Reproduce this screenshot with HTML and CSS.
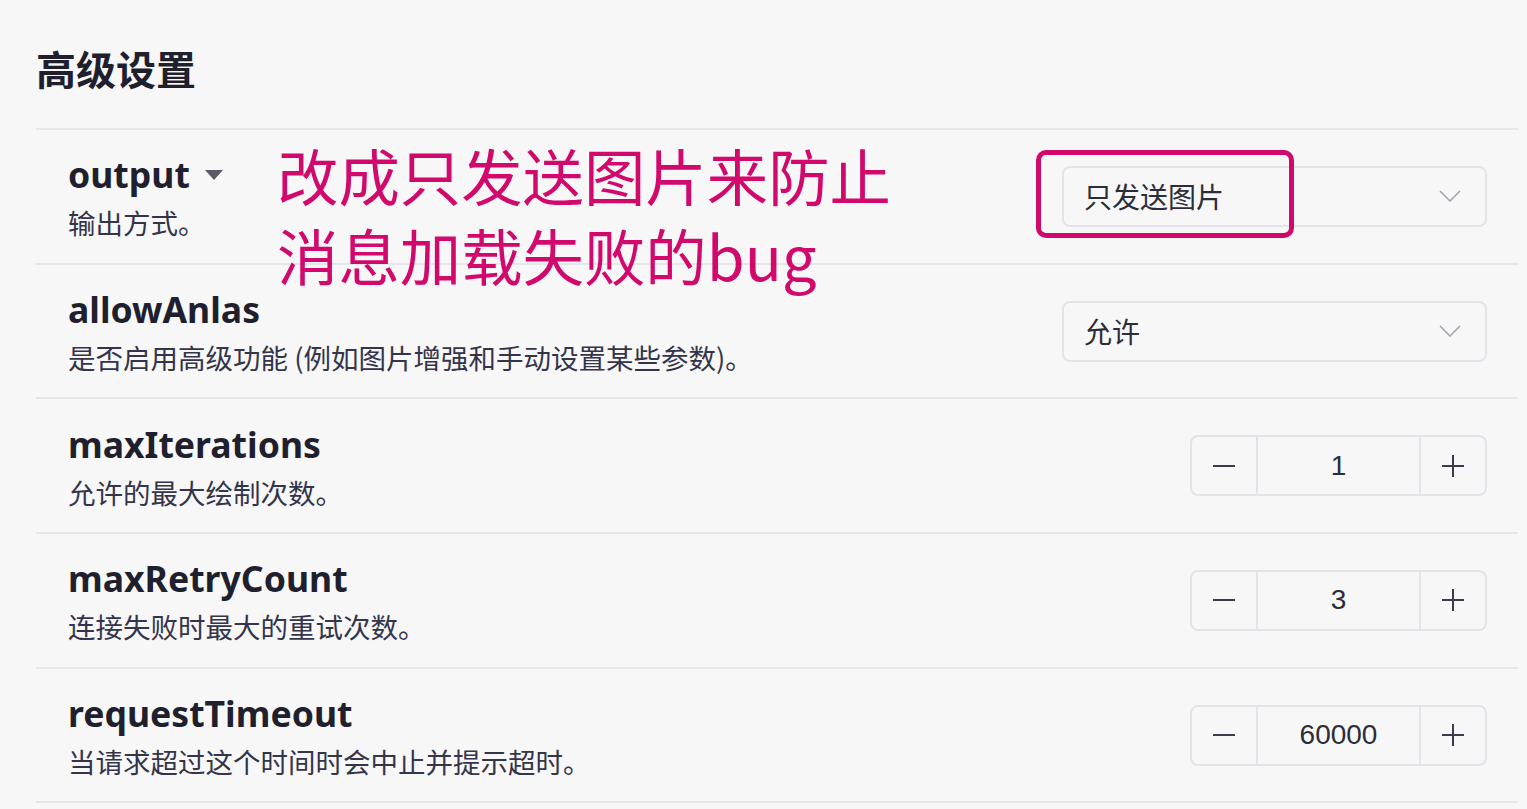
FILE: index.html
```html
<!DOCTYPE html>
<html lang="zh-CN">
<head>
<meta charset="utf-8">
<title>高级设置</title>
<link rel="stylesheet" href="styles.css">
</head>
<body>
<div class="page">
  <h2 class="title">高级设置</h2>
  <div class="list">
    <div class="row">
      <div class="info">
        <div class="label">output <span class="caret"></span></div>
        <div class="desc">输出方式。</div>
      </div>
      <div class="select"><span>只发送图片</span>
        <svg class="chev" width="22" height="12" viewBox="0 0 22 12"><path d="M1 1 L11 11 L21 1" fill="none" stroke="#a3a6ae" stroke-width="1.6"/></svg>
      </div>
    </div>
    <div class="row">
      <div class="info">
        <div class="label">allowAnlas</div>
        <div class="desc">是否启用高级功能 (例如图片增强和手动设置某些参数)。</div>
      </div>
      <div class="select"><span>允许</span>
        <svg class="chev" width="22" height="12" viewBox="0 0 22 12"><path d="M1 1 L11 11 L21 1" fill="none" stroke="#a3a6ae" stroke-width="1.6"/></svg>
      </div>
    </div>
    <div class="row">
      <div class="info">
        <div class="label">maxIterations</div>
        <div class="desc">允许的最大绘制次数。</div>
      </div>
      <div class="number">
        <div class="btn"><svg width="22" height="22" viewBox="0 0 22 22"><path d="M0 11 H22" stroke="#3b3b4b" stroke-width="2"/></svg></div>
        <div class="val">1</div>
        <div class="btn"><svg width="22" height="22" viewBox="0 0 22 22"><path d="M0 11 H22 M11 0 V22" stroke="#3b3b4b" stroke-width="2"/></svg></div>
      </div>
    </div>
    <div class="row">
      <div class="info">
        <div class="label">maxRetryCount</div>
        <div class="desc">连接失败时最大的重试次数。</div>
      </div>
      <div class="number">
        <div class="btn"><svg width="22" height="22" viewBox="0 0 22 22"><path d="M0 11 H22" stroke="#3b3b4b" stroke-width="2"/></svg></div>
        <div class="val">3</div>
        <div class="btn"><svg width="22" height="22" viewBox="0 0 22 22"><path d="M0 11 H22 M11 0 V22" stroke="#3b3b4b" stroke-width="2"/></svg></div>
      </div>
    </div>
    <div class="row">
      <div class="info">
        <div class="label">requestTimeout</div>
        <div class="desc">当请求超过这个时间时会中止并提示超时。</div>
      </div>
      <div class="number">
        <div class="btn"><svg width="22" height="22" viewBox="0 0 22 22"><path d="M0 11 H22" stroke="#3b3b4b" stroke-width="2"/></svg></div>
        <div class="val">60000</div>
        <div class="btn"><svg width="22" height="22" viewBox="0 0 22 22"><path d="M0 11 H22 M11 0 V22" stroke="#3b3b4b" stroke-width="2"/></svg></div>
      </div>
    </div>
  </div>
  <div class="note">
    <div class="note-line">改成只发送图片来防止</div>
    <div class="note-line">消息加载失败的bug</div>
  </div>
  <div class="mark"></div>
</div>
</body>
</html>
```

FILE: styles.css
```css
html, body {
  margin: 0;
  padding: 0;
  background: #f7f7f7;
}
body {
  font-family: "Noto Sans", "Noto Sans CJK SC", sans-serif;
  color: #22222f;
}
.page {
  position: relative;
  width: 1482px;
  padding: 39px 0 0 36px;
}
.title {
  margin: 0 0 31px 0;
  font-family: "Noto Sans CJK SC", sans-serif;
  font-size: 40px;
  line-height: 58px;
  font-weight: 700;
  color: #1f1f2e;
}
.list {
  border-bottom: 2px solid #e4e6eb;
}
.row {
  display: flex;
  align-items: center;
  justify-content: space-between;
  height: 132.7px;
  border-top: 2px solid #e4e6eb;
  padding: 0 31px 0 32px;
}
.info {
  display: flex;
  flex-direction: column;
}
.label {
  font-size: 35.6px;
  line-height: 44px;
  font-weight: 700;
  color: #1f1f2e;
  display: flex;
  align-items: center;
  gap: 15px;
}
.caret {
  width: 0;
  height: 0;
  border-left: 9px solid transparent;
  border-right: 9px solid transparent;
  border-top: 10px solid #5a5a66;
  margin-top: 2px;
}
.desc {
  margin-top: 8px;
  font-family: "Noto Sans CJK SC", sans-serif;
  font-size: 27.5px;
  line-height: 36px;
  color: #34344a;
}
.select {
  box-sizing: border-box;
  width: 425px;
  height: 61px;
  border: 2px solid #e2e4e9;
  border-radius: 8px;
  display: flex;
  align-items: center;
  justify-content: space-between;
  padding: 0 24px 0 20px;
  font-family: "Noto Sans CJK SC", sans-serif;
  font-size: 28px;
  color: #2c2c3a;
}
.chev {
  display: block;
}
.number {
  box-sizing: border-box;
  width: 297px;
  height: 61px;
  border: 2px solid #e2e4e9;
  border-radius: 8px;
  display: flex;
}
.btn {
  width: 64px;
  display: flex;
  align-items: center;
  justify-content: center;
}
.btn svg {
  display: block;
}
.val {
  flex: 1;
  border-left: 2px solid #e2e4e9;
  border-right: 2px solid #e2e4e9;
  display: flex;
  align-items: center;
  justify-content: center;
  font-family: "Liberation Sans", Arial, sans-serif;
  font-size: 28px;
  color: #2c2c3a;
}
.note {
  position: absolute;
  left: 277px;
  top: 139px;
  display: flex;
  flex-direction: column;
  gap: 8px;
  font-family: "Noto Sans CJK SC", sans-serif;
  font-size: 61.4px;
  line-height: 72px;
  color: #d2096c;
  white-space: nowrap;
}
.mark {
  position: absolute;
  left: 1036px;
  top: 150px;
  width: 258px;
  height: 88px;
  box-sizing: border-box;
  border: 5px solid #d2096c;
  border-radius: 10px;
}
```
